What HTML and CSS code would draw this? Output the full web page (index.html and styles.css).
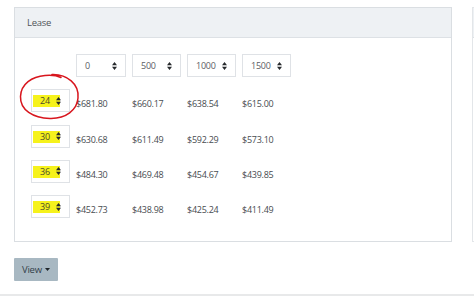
FILE: index.html
```html
<!DOCTYPE html>
<html lang="en">
<head>
<meta charset="utf-8">
<title>Lease</title>
<link rel="stylesheet" href="styles.css">
</head>
<body>
<div class="page">
  <div class="cards">
    <section class="card">
      <div class="card-header">Lease</div>
      <div class="card-body">
        <div class="grid">
          <div class="corner"></div>
          <div class="sel"><span class="val">0</span><svg class="updown" viewBox="0 0 5 8" width="5" height="8"><path d="M0 3.2 2.5 0 5 3.2Z M0 4.8 2.5 8 5 4.8Z"/></svg></div>
          <div class="sel"><span class="val">500</span><svg class="updown" viewBox="0 0 5 8" width="5" height="8"><path d="M0 3.2 2.5 0 5 3.2Z M0 4.8 2.5 8 5 4.8Z"/></svg></div>
          <div class="sel"><span class="val">1000</span><svg class="updown" viewBox="0 0 5 8" width="5" height="8"><path d="M0 3.2 2.5 0 5 3.2Z M0 4.8 2.5 8 5 4.8Z"/></svg></div>
          <div class="sel"><span class="val">1500</span><svg class="updown" viewBox="0 0 5 8" width="5" height="8"><path d="M0 3.2 2.5 0 5 3.2Z M0 4.8 2.5 8 5 4.8Z"/></svg></div>

          <div class="sel term"><span class="val">24</span><svg class="updown" viewBox="0 0 5 8" width="5" height="8"><path d="M0 3.2 2.5 0 5 3.2Z M0 4.8 2.5 8 5 4.8Z"/></svg></div>
          <div class="price">$681.80</div>
          <div class="price">$660.17</div>
          <div class="price">$638.54</div>
          <div class="price">$615.00</div>

          <div class="sel term"><span class="val">30</span><svg class="updown" viewBox="0 0 5 8" width="5" height="8"><path d="M0 3.2 2.5 0 5 3.2Z M0 4.8 2.5 8 5 4.8Z"/></svg></div>
          <div class="price">$630.68</div>
          <div class="price">$611.49</div>
          <div class="price">$592.29</div>
          <div class="price">$573.10</div>

          <div class="sel term"><span class="val">36</span><svg class="updown" viewBox="0 0 5 8" width="5" height="8"><path d="M0 3.2 2.5 0 5 3.2Z M0 4.8 2.5 8 5 4.8Z"/></svg></div>
          <div class="price">$484.30</div>
          <div class="price">$469.48</div>
          <div class="price">$454.67</div>
          <div class="price">$439.85</div>

          <div class="sel term"><span class="val">39</span><svg class="updown" viewBox="0 0 5 8" width="5" height="8"><path d="M0 3.2 2.5 0 5 3.2Z M0 4.8 2.5 8 5 4.8Z"/></svg></div>
          <div class="price">$452.73</div>
          <div class="price">$438.98</div>
          <div class="price">$425.24</div>
          <div class="price">$411.49</div>
        </div>
      </div>
    </section>
    <section class="card card-next">
      <div class="card-header"></div>
    </section>
  </div>
  <div class="actions">
    <button class="btn-view" type="button">View<svg class="caret" viewBox="0 0 5 3" width="5" height="3"><path d="M0 0H5L2.5 3Z"/></svg></button>
  </div>
  <div class="footer-bar"></div>
  <svg class="annotation" viewBox="0 0 474 296" width="474" height="296">
    <path d="M52 74.5 C67 74 79.5 84 78 98 C77 110 66 118.8 50 118.4 C33 118 20 110 20.5 96.5 C21 84 32 76.5 45 75.5 C51 75 57 75.6 61 77.5"/>
  </svg>
</div>
</body>
</html>
```

FILE: styles.css
```css
html, body {
  margin: 0;
  padding: 0;
  background: #ffffff;
  overflow: hidden;
}

.page {
  position: relative;
  width: 474px;
  height: 296px;
  overflow: hidden;
  font-family: "Open Sans", "Noto Sans", sans-serif;
  font-size: 9px;
  letter-spacing: -0.25px;
  color: #474c50;
}

.cards {
  display: flex;
  gap: 20px;
  padding: 7px 0 0 14px;
}

.card {
  flex: 0 0 auto;
  width: 438px;
  box-sizing: border-box;
  border: 1px solid #dadee2;
  background: #ffffff;
}

.card-next {
  width: 200px;
  height: 235px;
  border-color: #e3e6e9;
}

.card-header {
  height: 29px;
  background: #eef1f4;
  border-bottom: 1px solid #dde1e5;
  display: flex;
  align-items: center;
  padding-left: 12px;
  font-size: 9.5px;
  color: #505559;
}

.card-body {
  padding: 16px 0 22px 16px;
}

.grid {
  display: grid;
  grid-template-columns: 39px 50px 49px 49px 49px;
  grid-auto-rows: 23px;
  column-gap: 6px;
  row-gap: 12.25px;
}

.sel {
  box-sizing: border-box;
  height: 23px;
  border: 1px solid #dfe2e6;
  background: #ffffff;
  display: flex;
  align-items: center;
  padding: 0 8px 0 8px;
  color: #5b6064;
}

.sel .val {
  flex: 1 1 auto;
}

.updown {
  flex: 0 0 auto;
  fill: #26292c;
}

.term {
  background: linear-gradient(#f6f21c, #f6f21c) no-repeat 1px 5px / 27px 12px, #ffffff;
  color: #4b4a2c;
  padding-right: 8px;
}

.price {
  display: flex;
  align-items: center;
  padding-top: 6px;
  color: #484c50;
  white-space: nowrap;
}

.actions {
  padding: 16px 0 0 14px;
  height: 23px;
}

.btn-view {
  box-sizing: border-box;
  width: 44px;
  height: 23px;
  border: 0;
  border-radius: 1px;
  background: #a8b8c2;
  color: #334049;
  font-family: "Open Sans", "Noto Sans", sans-serif;
  font-size: 9.5px;
  letter-spacing: -0.25px;
  display: flex;
  align-items: center;
  padding: 0 0 0 8px;
  gap: 3px;
}

.caret {
  fill: #1f2529;
}

.footer-bar {
  margin-top: 13px;
  height: 3px;
  background: #e8e9ea;
}

.annotation {
  position: absolute;
  left: 0;
  top: 0;
  pointer-events: none;
  fill: none;
  stroke: #d8161e;
  stroke-width: 1.5;
  stroke-linecap: round;
}
```
